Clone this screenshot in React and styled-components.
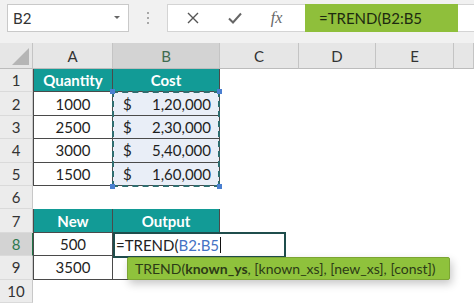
import React from "react";
import styled, { createGlobalStyle } from "styled-components";

const Global = createGlobalStyle`
  html, body { margin: 0; padding: 0; background: #fff; }
  body { font-family: Lato, "Open Sans", sans-serif; color: #222; }
`;

const Page = styled.div`
  width: 474px;
  height: 305px;
  overflow: hidden;
  display: flex;
  flex-direction: column;
`;

const Toolbar = styled.div`
  height: 43px;
  flex: none;
  background: #f1f1f1;
  display: flex;
  align-items: flex-start;
  padding-top: 4px;
  box-sizing: border-box;
`;

const NameBox = styled.div`
  margin-left: 7px;
  width: 122px;
  height: 28px;
  box-sizing: border-box;
  background: #fff;
  border: 1px solid #c9c9c9;
  display: flex;
  align-items: center;
  justify-content: space-between;
  padding: 0 8px 0 5px;
  font-size: 15px;
  color: #333;
`;

const Caret = styled.span`
  width: 0;
  height: 0;
  border-left: 3px solid transparent;
  border-right: 3px solid transparent;
  border-top: 3px solid #666;
  margin-top: -2px;
`;

const Dots = styled.div`
  width: 38px;
  height: 28px;
  display: flex;
  flex-direction: column;
  align-items: center;
  justify-content: center;
  gap: 3px;
  span {
    width: 2px;
    height: 2px;
    background: #a8a8a8;
  }
`;

const FormulaBar = styled.div`
  flex: 1;
  height: 28px;
  background: #fff;
  border: 1px solid #d4d4d4;
  border-right: none;
  box-sizing: border-box;
  display: flex;
  align-items: stretch;
`;

const IconArea = styled.div`
  width: 132px;
  display: flex;
  align-items: center;
  justify-content: space-around;
  padding: 0 4px 0 4px;
  box-sizing: border-box;
  color: #555;
`;

const Fx = styled.span`
  font-family: "Liberation Serif", serif;
  font-style: italic;
  font-size: 16px;
  color: #666;
`;

const FormulaText = styled.div`
  margin-left: 5px;
  width: 153px;
  background: #8fbf3b;
  display: flex;
  align-items: center;
  padding-left: 14px;
  box-sizing: border-box;
  font-size: 15px;
  color: #1d2a10;
  margin-top: -1px;
  margin-bottom: -1px;
`;

const Sheet = styled.div`
  display: grid;
  grid-template-columns: 33px 80px 107px 79px 77px 78px 1fr;
  grid-template-rows: 26px repeat(10, 23.4px);
  font-size: 15px;
`;

const ColHead = styled.div`
  grid-row: 1;
  grid-column: ${(p) => p.$c};
  background: ${(p) => (p.$active ? "#d3d3d3" : "#e6e6e6")};
  color: ${(p) => (p.$active ? "#3f6b4f" : "#333")};
  border-right: 1px solid #c4c4c4;
  border-bottom: 1px solid #bcbcbc;
  display: flex;
  align-items: center;
  justify-content: center;
`;

const Corner = styled.div`
  grid-row: 1;
  grid-column: 1;
  background: #e6e6e6;
  border-right: 1px solid #c4c4c4;
  border-bottom: 1px solid #bcbcbc;
  position: relative;
  &::after {
    content: "";
    position: absolute;
    right: 3px;
    bottom: 3px;
    width: 0;
    height: 0;
    border-left: 17px solid transparent;
    border-bottom: 17px solid #b5b5b5;
  }
`;

const RowHead = styled.div`
  grid-row: ${(p) => p.$r};
  grid-column: 1;
  box-sizing: border-box;
  background: ${(p) => (p.$active ? "#d3d3d3" : "#ececec")};
  color: ${(p) => (p.$active ? "#2d7a4f" : "#333")};
  border-right: 1px solid ${(p) => (p.$active ? "#217346" : "#c8c8c8")};
  border-bottom: 1px solid #dadada;
  display: flex;
  align-items: center;
  justify-content: center;
  font-size: 15px;
`;

const Cell = styled.div`
  grid-row: ${(p) => p.$r};
  grid-column: ${(p) => p.$c};
  box-sizing: border-box;
  display: flex;
  align-items: center;
  justify-content: ${(p) => (p.$money ? "space-between" : "center")};
  padding: ${(p) => (p.$money ? "0 8px 0 10px" : "0")};
  background: ${(p) => (p.$head ? "#129b96" : p.$ref ? "#e9eef7" : "#fff")};
  color: ${(p) => (p.$head ? "#fff" : "#1e1e1e")};
  font-weight: ${(p) => (p.$head ? 700 : 400)};
  border-right: 1px solid #4a4a4a;
  border-bottom: 1px solid #4a4a4a;
  border-left: ${(p) => (p.$first ? "1px solid #4a4a4a" : "none")};
`;

const RefRange = styled.div`
  grid-column: 3;
  grid-row: 3 / 7;
  border: 2px dashed #2f6d70;
  margin: -1px 0 -1px -1px;
  position: relative;
  pointer-events: none;
`;

const Handle = styled.span`
  position: absolute;
  width: 5px;
  height: 5px;
  background: #4a7fd0;
  ${(p) => (p.$top ? "top: -4px;" : "bottom: -4px;")}
  ${(p) => (p.$left ? "left: -4px;" : "right: -4px;")}
`;

const EditCell = styled.div`
  grid-column: 3 / 5;
  grid-row: 9;
  justify-self: start;
  width: 173px;
  margin: -1px 0 -2px 0;
  border: 2px solid #1f4d4c;
  background: #fff;
  box-sizing: border-box;
  display: flex;
  align-items: center;
  padding-left: 1px;
  font-size: 15px;
  position: relative;
  z-index: 2;
`;

const RefText = styled.span`
  color: #4472c4;
`;

const Cursor = styled.span`
  width: 1px;
  height: 16px;
  background: #111;
  margin-left: 1px;
`;

const Tip = styled.div`
  position: absolute;
  left: 12px;
  top: calc(100% + 1px);
  width: 323px;
  height: 23px;
  box-sizing: border-box;
  background: #8fc23c;
  border: 1px solid #7ca533;
  border-radius: 2px;
  box-shadow: 2px 4px 8px rgba(0, 0, 0, 0.22);
  display: flex;
  align-items: center;
  padding-left: 7px;
  font-size: 14px;
  color: #2c3b17;
  white-space: nowrap;
  b {
    font-weight: 700;
  }
`;

const XIcon = () => (
  <svg width="14" height="14" viewBox="0 0 14 14">
    <path d="M2 2 L12 12 M12 2 L2 12" stroke="#555" strokeWidth="1.4" fill="none" />
  </svg>
);

const CheckIcon = () => (
  <svg width="16" height="14" viewBox="0 0 16 14">
    <path d="M2 7.5 L6 11.5 L14 2.5" stroke="#666" strokeWidth="2" fill="none" />
  </svg>
);

const cols = ["A", "B", "C", "D", "E", ""];

const data = [
  { a: "Quantity", b: "Cost", head: true },
  { a: "1000", b: "1,20,000", money: true },
  { a: "2500", b: "2,30,000", money: true },
  { a: "3000", b: "5,40,000", money: true },
  { a: "1500", b: "1,60,000", money: true },
  { blank: true },
  { a: "New", b: "Output", head: true },
  { a: "500", b: "" },
  { a: "3500", b: "" },
  { blank: true },
];

const App = () => {
  return (
    <Page>
      <Global />
      <Toolbar>
        <NameBox>
          B2
          <Caret />
        </NameBox>
        <Dots>
          <span />
          <span />
          <span />
        </Dots>
        <FormulaBar>
          <IconArea>
            <XIcon />
            <CheckIcon />
            <Fx>fx</Fx>
          </IconArea>
          <FormulaText>=TREND(B2:B5</FormulaText>
        </FormulaBar>
      </Toolbar>
      <Sheet>
        <Corner />
        {cols.map((c, i) => (
          <ColHead key={i} $c={i + 2} $active={c === "B"}>
            {c}
          </ColHead>
        ))}
        {data.map((r, i) => {
          const n = i + 1;
          const gr = n + 1;
          return (
            <React.Fragment key={n}>
              <RowHead $r={gr} $active={n === 8}>
                {n}
              </RowHead>
              {!r.blank && (
                <>
                  <Cell $r={gr} $c={2} $first $head={r.head}>
                    {r.a}
                  </Cell>
                  <Cell $r={gr} $c={3} $head={r.head} $ref={r.money} $money={r.money}>
                    {r.money ? (
                      <>
                        <span>$</span>
                        <span>{r.b}</span>
                      </>
                    ) : (
                      r.b
                    )}
                  </Cell>
                </>
              )}
            </React.Fragment>
          );
        })}
        <RefRange>
          <Handle $top $left />
          <Handle $top />
          <Handle $left />
          <Handle />
        </RefRange>
        <EditCell>
          =TREND(<RefText>B2:B5</RefText>
          <Cursor />
          <Tip>
            TREND(<b>known_ys</b>, [known_xs], [new_xs], [const])
          </Tip>
        </EditCell>
      </Sheet>
    </Page>
  );
};

export default App;
